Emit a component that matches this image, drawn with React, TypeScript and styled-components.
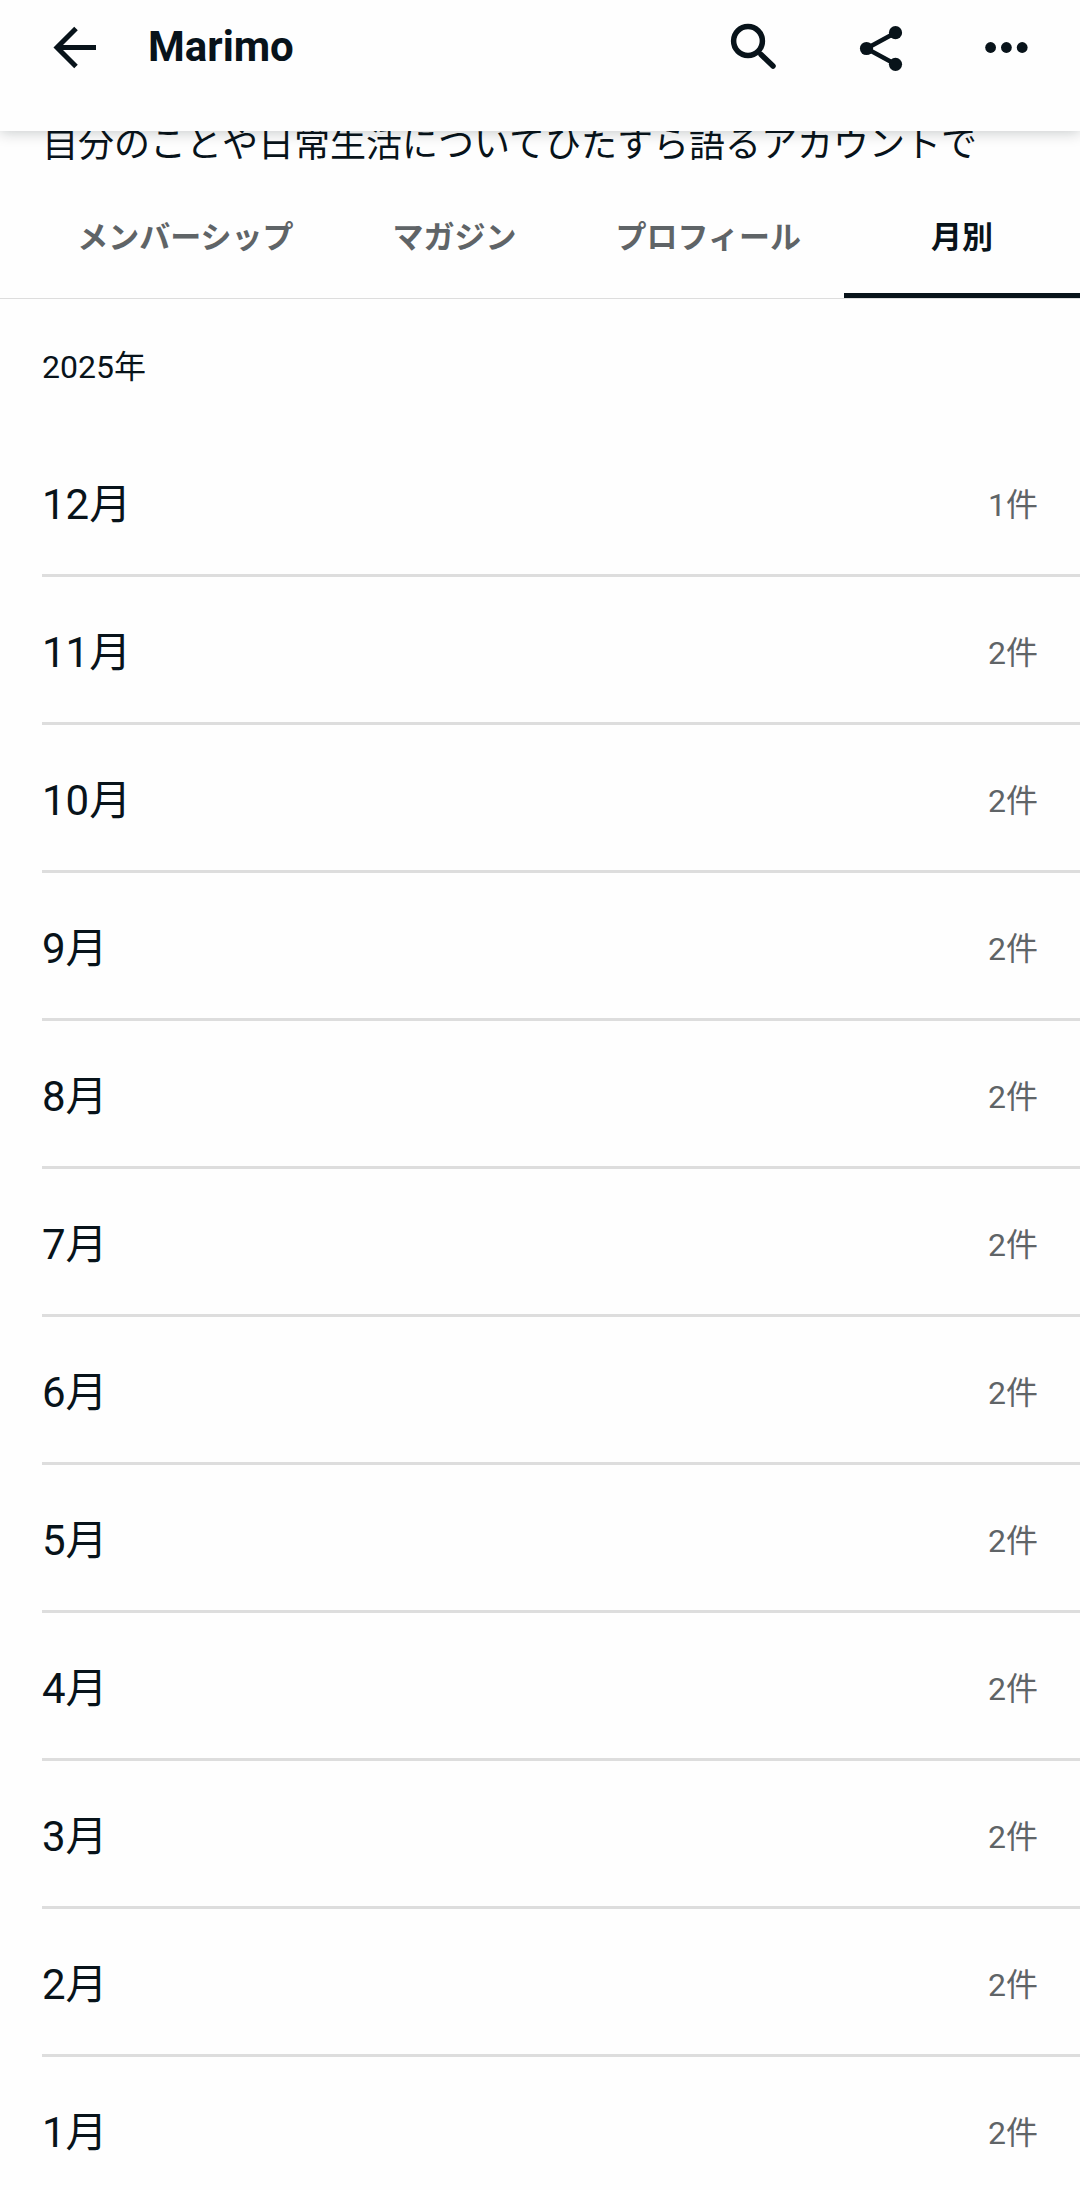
import React from "react";
import styled, { createGlobalStyle } from "styled-components";

const ink = "#08131a";
const muted = "#5f6467";
const line = "#dddddd";

const GlobalStyle = createGlobalStyle`
  *, *::before, *::after { box-sizing: border-box; }
  body {
    margin: 0;
    background: #fefefe;
    color: ${ink};
    font-family: Roboto, "Noto Sans CJK JP", sans-serif;
  }
`;

const Screen = styled.div`
  display: flex;
  flex-direction: column;
`;

const AppBar = styled.header`
  position: relative;
  z-index: 1;
  display: flex;
  align-items: center;
  padding: 22px 50px 59px 51px;
  background: #fefefe;
  box-shadow: 0 1px 14px rgba(8, 19, 26, 0.24);
`;

const Title = styled.h1`
  flex: 1;
  margin: 0 0 0 49px;
  font-size: 42px;
  line-height: 48px;
  font-weight: 700;
`;

const Actions = styled.div`
  display: flex;
  gap: 78px;
`;

const IconButton = styled.button`
  display: block;
  width: 48px;
  height: 50px;
  padding: 1px 0;
  border: 0;
  background: none;
  color: inherit;
  cursor: pointer;

  svg {
    display: block;
    overflow: visible;
  }
`;

const BioClip = styled.div`
  display: flex;
  flex-direction: column;
  justify-content: flex-end;
  height: 46px;
  padding: 0 42px;
  overflow: hidden;
`;

const Bio = styled.p`
  margin: 0;
  font-size: 36px;
  line-height: 64px;
  white-space: nowrap;
`;

const Tabs = styled.nav`
  display: flex;
  justify-content: flex-end;
  overflow: hidden;
  border-bottom: 1px solid ${line};
`;

const Tab = styled.button<{ $active?: boolean }>`
  flex: none;
  min-width: 236px;
  padding: 40px 43px 34px;
  border: 0;
  border-bottom: 5px solid ${(p) => (p.$active ? ink : "transparent")};
  background: none;
  color: ${(p) => (p.$active ? ink : muted)};
  font-family: inherit;
  font-size: 31px;
  line-height: 42px;
  font-weight: 700;
  white-space: nowrap;
  cursor: pointer;
`;

const Year = styled.h2`
  margin: 0;
  padding: 47px 42px 41px;
  font-size: 32px;
  line-height: 42px;
  font-weight: 400;
`;

const MonthList = styled.ul`
  margin: 0;
  padding: 0 0 0 42px;
  list-style: none;
`;

const MonthItem = styled.li`
  border-bottom: 3px solid ${line};

  &:last-child {
    border-bottom: 0;
  }
`;

const MonthLink = styled.a`
  display: flex;
  align-items: center;
  justify-content: space-between;
  padding: 52px 42px 45px 0;
  color: inherit;
  text-decoration: none;
`;

const Month = styled.span`
  font-size: 42px;
  line-height: 48px;
`;

const Count = styled.span`
  color: ${muted};
  font-size: 32px;
  line-height: 48px;
`;

const tabs = ["メンバーシップ", "マガジン", "プロフィール", "月別"];
const months = [12, 11, 10, 9, 8, 7, 6, 5, 4, 3, 2, 1].map((month) => ({
  month,
  count: month === 12 ? 1 : 2,
}));

const BackIcon = () => (
  <svg width="48" height="48" viewBox="0 0 48 48" fill="none" stroke="currentColor" strokeWidth="5" aria-hidden="true">
    <path d="M45 24.500H7M25 5.500L6 24.500L25 43.500" />
  </svg>
);

const SearchIcon = () => (
  <svg width="48" height="48" viewBox="0 0 48 48" fill="none" stroke="currentColor" strokeWidth="5.500" aria-hidden="true">
    <circle cx="18" cy="18" r="14.400" />
    <path d="M31 31.500L43 43" strokeLinecap="round" />
  </svg>
);

const ShareIcon = () => (
  <svg width="48" height="48" viewBox="0 0 48 48" fill="currentColor" aria-hidden="true">
    <path d="M39.500 9.700L10.500 25.500L39.500 41.300" fill="none" stroke="currentColor" strokeWidth="4.500" />
    <circle cx="10.500" cy="25.500" r="6.600" />
    <circle cx="39.500" cy="9.700" r="6.600" />
    <circle cx="39.500" cy="41.300" r="6.600" />
  </svg>
);

const MoreIcon = () => (
  <svg width="48" height="48" viewBox="0 0 48 48" fill="currentColor" aria-hidden="true">
    <circle cx="8.600" cy="24.500" r="5.400" />
    <circle cx="24.400" cy="24.500" r="5.400" />
    <circle cx="40.200" cy="24.500" r="5.400" />
  </svg>
);

export default function App() {
  return (
    <Screen lang="ja">
      <GlobalStyle />
      <AppBar>
        <IconButton aria-label="戻る"><BackIcon /></IconButton>
        <Title>Marimo</Title>
        <Actions>
          <IconButton aria-label="検索"><SearchIcon /></IconButton>
          <IconButton aria-label="共有"><ShareIcon /></IconButton>
          <IconButton aria-label="その他"><MoreIcon /></IconButton>
        </Actions>
      </AppBar>
      <BioClip>
        <Bio>自分のことや日常生活についてひたすら語るアカウントで</Bio>
      </BioClip>
      <Tabs>
        {tabs.map((label) => (
          <Tab key={label} $active={label === "月別"} aria-pressed={label === "月別"}>
            {label}
          </Tab>
        ))}
      </Tabs>
      <main>
        <Year>2025年</Year>
        <MonthList>
          {months.map(({ month, count }) => (
            <MonthItem key={month}>
              <MonthLink href={`#month-${month}`}>
                <Month>{month}月</Month>
                <Count>{count}件</Count>
              </MonthLink>
            </MonthItem>
          ))}
        </MonthList>
      </main>
    </Screen>
  );
}
